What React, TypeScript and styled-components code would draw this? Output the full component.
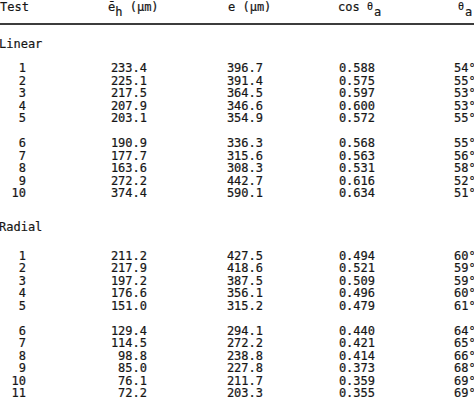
import styled, { createGlobalStyle } from 'styled-components';

type Row = [string, string, string, string, string];

const LINEAR: Row[][] = [
  [
    ['1', '233.4', '396.7', '0.588', '54°'],
    ['2', '225.1', '391.4', '0.575', '55°'],
    ['3', '217.5', '364.5', '0.597', '53°'],
    ['4', '207.9', '346.6', '0.600', '53°'],
    ['5', '203.1', '354.9', '0.572', '55°'],
  ],
  [
    ['6', '190.9', '336.3', '0.568', '55°'],
    ['7', '177.7', '315.6', '0.563', '56°'],
    ['8', '163.6', '308.3', '0.531', '58°'],
    ['9', '272.2', '442.7', '0.616', '52°'],
    ['10', '374.4', '590.1', '0.634', '51°'],
  ],
];

const RADIAL: Row[][] = [
  [
    ['1', '211.2', '427.5', '0.494', '60°'],
    ['2', '217.9', '418.6', '0.521', '59°'],
    ['3', '197.2', '387.5', '0.509', '59°'],
    ['4', '176.6', '356.1', '0.496', '60°'],
    ['5', '151.0', '315.2', '0.479', '61°'],
  ],
  [
    ['6', '129.4', '294.1', '0.440', '64°'],
    ['7', '114.5', '272.2', '0.421', '65°'],
    ['8', '98.8', '238.8', '0.414', '66°'],
    ['9', '85.0', '227.8', '0.373', '68°'],
    ['10', '76.1', '211.7', '0.359', '69°'],
    ['11', '72.2', '203.3', '0.355', '69°'],
  ],
];

const App = (): JSX.Element => {
  const renderGroups = (groups: Row[][]) =>
    groups.map((group, gi) => (
      <Group key={gi}>
        {group.map((row) => (
          <DataRow key={row[0]}>
            {row.map((cell, ci) => (
              <Cell key={ci} $last={ci === 4}>{cell}</Cell>
            ))}
          </DataRow>
        ))}
      </Group>
    ));

  return (
    <>
      <GlobalStyle />
      <Page>
        <HeaderRow>
          <HeadCell>Test</HeadCell>
          <HeadCell>
            e&#772;<Sub>h</Sub> (μm)
          </HeadCell>
          <HeadCell>e (μm)</HeadCell>
          <HeadCell>
            cos <Theta>θ</Theta><Sub>a</Sub>
          </HeadCell>
          <HeadCell>
            <Theta>θ</Theta><Sub>a</Sub>
          </HeadCell>
        </HeaderRow>
        <Rule />

        <SectionLabel>Linear</SectionLabel>
        <Body>{renderGroups(LINEAR)}</Body>

        <SectionLabel $top={21}>Radial</SectionLabel>
        <Body $top={16}>{renderGroups(RADIAL)}</Body>
      </Page>
    </>
  );
};

export default App;

const GlobalStyle = createGlobalStyle`
  html, body {
    margin: 0;
    padding: 0;
    background: #fff;
    overflow: hidden;
  }
  body {
    font-family: "DejaVu Sans Mono", "Liberation Mono", monospace;
    font-size: 12px;
    color: #161616;
    -webkit-text-stroke: 0.2px #161616;
  }
`;

const Page = styled.div`
  width: 474px;
  height: 411px;
  overflow: hidden;
  background: #fff;
`;

const HeaderRow = styled.div`
  display: grid;
  grid-template-columns: 108px 120px 110px 120px 120px;
  height: 23px;
  line-height: 14px;
  white-space: nowrap;
`;

const HeadCell = styled.div`
  text-align: left;
`;

const Sub = styled.span`
  position: relative;
  top: 5px;
  font-size: 12px;
`;

const Theta = styled.span`
  position: relative;
  top: -1px;
  font-size: 10px;
  margin-right: 1px;
`;

const Rule = styled.div`
  height: 2px;
  background: #3c3c3c;
`;

const SectionLabel = styled.div<{ $top?: number }>`
  margin-top: ${(p) => p.$top ?? 13}px;
  margin-left: -1px;
  line-height: 13px;
`;

const Body = styled.div<{ $top?: number }>`
  display: flex;
  flex-direction: column;
  gap: 12.5px;
  margin-top: ${(p) => p.$top ?? 11}px;
`;

const Group = styled.div`
  display: flex;
  flex-direction: column;
`;

const DataRow = styled.div`
  display: grid;
  grid-template-columns: 26px 121px 116px 112px 140px;
  line-height: 12.5px;
  white-space: nowrap;
`;

const Cell = styled.div<{ $last?: boolean }>`
  text-align: ${(p) => (p.$last ? 'left' : 'right')};
  padding-left: ${(p) => (p.$last ? '79px' : '0')};
`;
